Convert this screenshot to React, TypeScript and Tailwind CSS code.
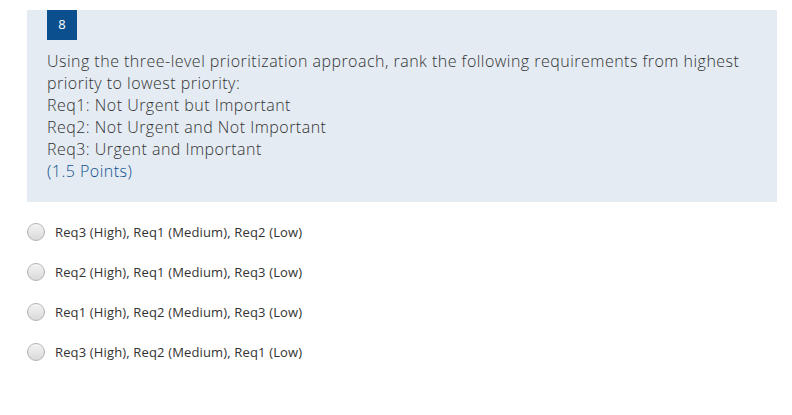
import { FC } from 'react';

const options = [
  'Req3 (High), Req1 (Medium), Req2 (Low)',
  'Req2 (High), Req1 (Medium), Req3 (Low)',
  'Req1 (High), Req2 (Medium), Req3 (Low)',
  'Req3 (High), Req2 (Medium), Req1 (Low)',
];

const Radio: FC = () => (
  <span className="w-[18px] h-[18px] rounded-full border border-[#b4b4b4] bg-gradient-to-b from-[#f4f4f4] to-[#d9d9d9] shrink-0" />
);

const App: FC = () => {
  return (
    <div className="w-[792px] h-[415px] bg-white pt-[10px] px-[27px] font-['Open_Sans',sans-serif]">
      <section className="w-[750px] bg-[#e4ebf2] px-5 pb-5">
        <div className="w-[30px] h-[30px] bg-[#0b4f8f] text-white text-[13px] flex items-center justify-center">
          8
        </div>
        <div className="mt-[10px] text-[16px] leading-[22px] font-light text-[#333] tracking-[0.48px]">
          <p>Using the three-level prioritization approach, rank the following requirements from highest priority to lowest priority:</p>
          <p>Req1: Not Urgent but Important</p>
          <p>Req2: Not Urgent and Not Important</p>
          <p>Req3: Urgent and Important</p>
          <p className="text-[#0b4f8f]">(1.5 Points)</p>
        </div>
      </section>
      <div className="mt-[21px] flex flex-col gap-[22px]">
        {options.map((o) => (
          <label key={o} className="flex items-center gap-[10px] h-[18px]">
            <Radio />
            <span className="text-[13px] leading-[18px] text-[#333] tracking-[0.15px]">{o}</span>
          </label>
        ))}
      </div>
    </div>
  );
};

export default App;
